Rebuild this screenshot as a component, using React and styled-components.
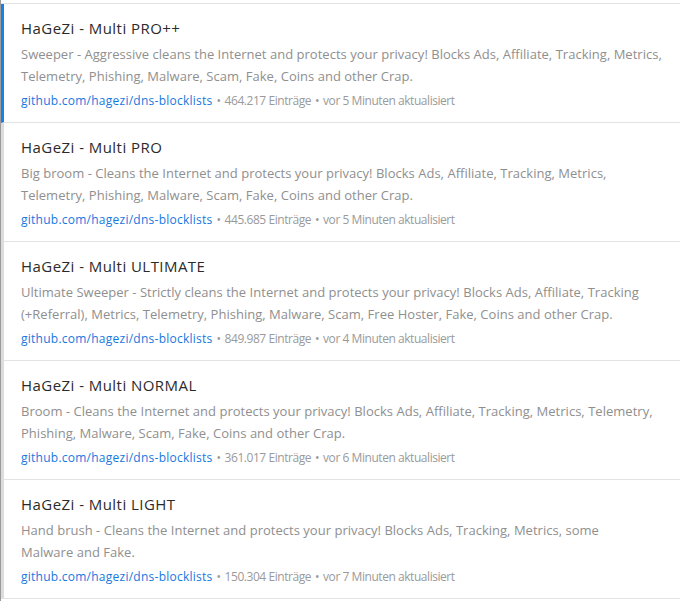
import React from 'react';
import styled, { createGlobalStyle } from 'styled-components';

const GlobalStyle = createGlobalStyle`
  html, body {
    margin: 0;
    padding: 0;
    background: #ffffff;
  }
  body {
    font-family: "Open Sans", "Noto Sans", Arial, sans-serif;
  }
`;

const Page = styled.div`
  padding-top: 3px;
  border-left: 1px solid #9a9a9a;
  min-height: 598px;
`;

const List = styled.ul`
  list-style: none;
  margin: 0;
  padding: 0;
  border-top: 1px solid #e3e3e3;
`;

const Item = styled.li`
  border-left: 3px solid ${(p) => (p.$active ? '#1a7ee6' : '#dcdcdc')};
  border-bottom: 1px solid #e3e3e3;
  padding: 14px 8px 12px 17px;
  background: #ffffff;
  overflow: hidden;
`;

const Title = styled.div`
  font-size: 15px;
  line-height: 20px;
  color: #2b2b2b;
  letter-spacing: 0.45px;
`;

const Description = styled.p`
  margin: 5px 0 0;
  font-size: 13px;
  line-height: 22px;
  color: #8f8f8f;
  letter-spacing: 0.02px;
  white-space: nowrap;
`;

const Meta = styled.div`
  margin-top: 5px;
  font-size: 12px;
  line-height: 18px;
  color: #9a9a9a;
  letter-spacing: -0.45px;
  white-space: nowrap;
`;

const Link = styled.a`
  color: #1778e0;
  text-decoration: none;
  letter-spacing: 0.25px;
`;

const Dot = styled.span`
  margin: 0 4px;
`;

const lists = [
  {
    name: 'HaGeZi - Multi PRO++',
    description: [
      'Sweeper - Aggressive cleans the Internet and protects your privacy! Blocks Ads, Affiliate, Tracking, Metrics,',
      'Telemetry, Phishing, Malware, Scam, Fake, Coins and other Crap.',
    ],
    entries: '464.217',
    updated: 'vor 5 Minuten aktualisiert',
    active: true,
  },
  {
    name: 'HaGeZi - Multi PRO',
    description: [
      'Big broom - Cleans the Internet and protects your privacy! Blocks Ads, Affiliate, Tracking, Metrics,',
      'Telemetry, Phishing, Malware, Scam, Fake, Coins and other Crap.',
    ],
    entries: '445.685',
    updated: 'vor 5 Minuten aktualisiert',
  },
  {
    name: 'HaGeZi - Multi ULTIMATE',
    description: [
      'Ultimate Sweeper - Strictly cleans the Internet and protects your privacy! Blocks Ads, Affiliate, Tracking',
      '(+Referral), Metrics, Telemetry, Phishing, Malware, Scam, Free Hoster, Fake, Coins and other Crap.',
    ],
    entries: '849.987',
    updated: 'vor 4 Minuten aktualisiert',
  },
  {
    name: 'HaGeZi - Multi NORMAL',
    description: [
      'Broom - Cleans the Internet and protects your privacy! Blocks Ads, Affiliate, Tracking, Metrics, Telemetry,',
      'Phishing, Malware, Scam, Fake, Coins and other Crap.',
    ],
    entries: '361.017',
    updated: 'vor 6 Minuten aktualisiert',
  },
  {
    name: 'HaGeZi - Multi LIGHT',
    description: [
      'Hand brush - Cleans the Internet and protects your privacy! Blocks Ads, Tracking, Metrics, some',
      'Malware and Fake.',
    ],
    entries: '150.304',
    updated: 'vor 7 Minuten aktualisiert',
  },
];

const App = () => {
  return (
    <Page>
      <GlobalStyle />
      <List>
        {lists.map((item) => (
          <Item key={item.name} $active={item.active}>
            <Title>{item.name}</Title>
            <Description>
              {item.description[0]}
              <br />
              {item.description[1]}
            </Description>
            <Meta>
              <Link href="#">github.com/hagezi/dns-blocklists</Link>
              <Dot>•</Dot>
              {item.entries} Einträge
              <Dot>•</Dot>
              {item.updated}
            </Meta>
          </Item>
        ))}
      </List>
    </Page>
  );
};

export default App;
